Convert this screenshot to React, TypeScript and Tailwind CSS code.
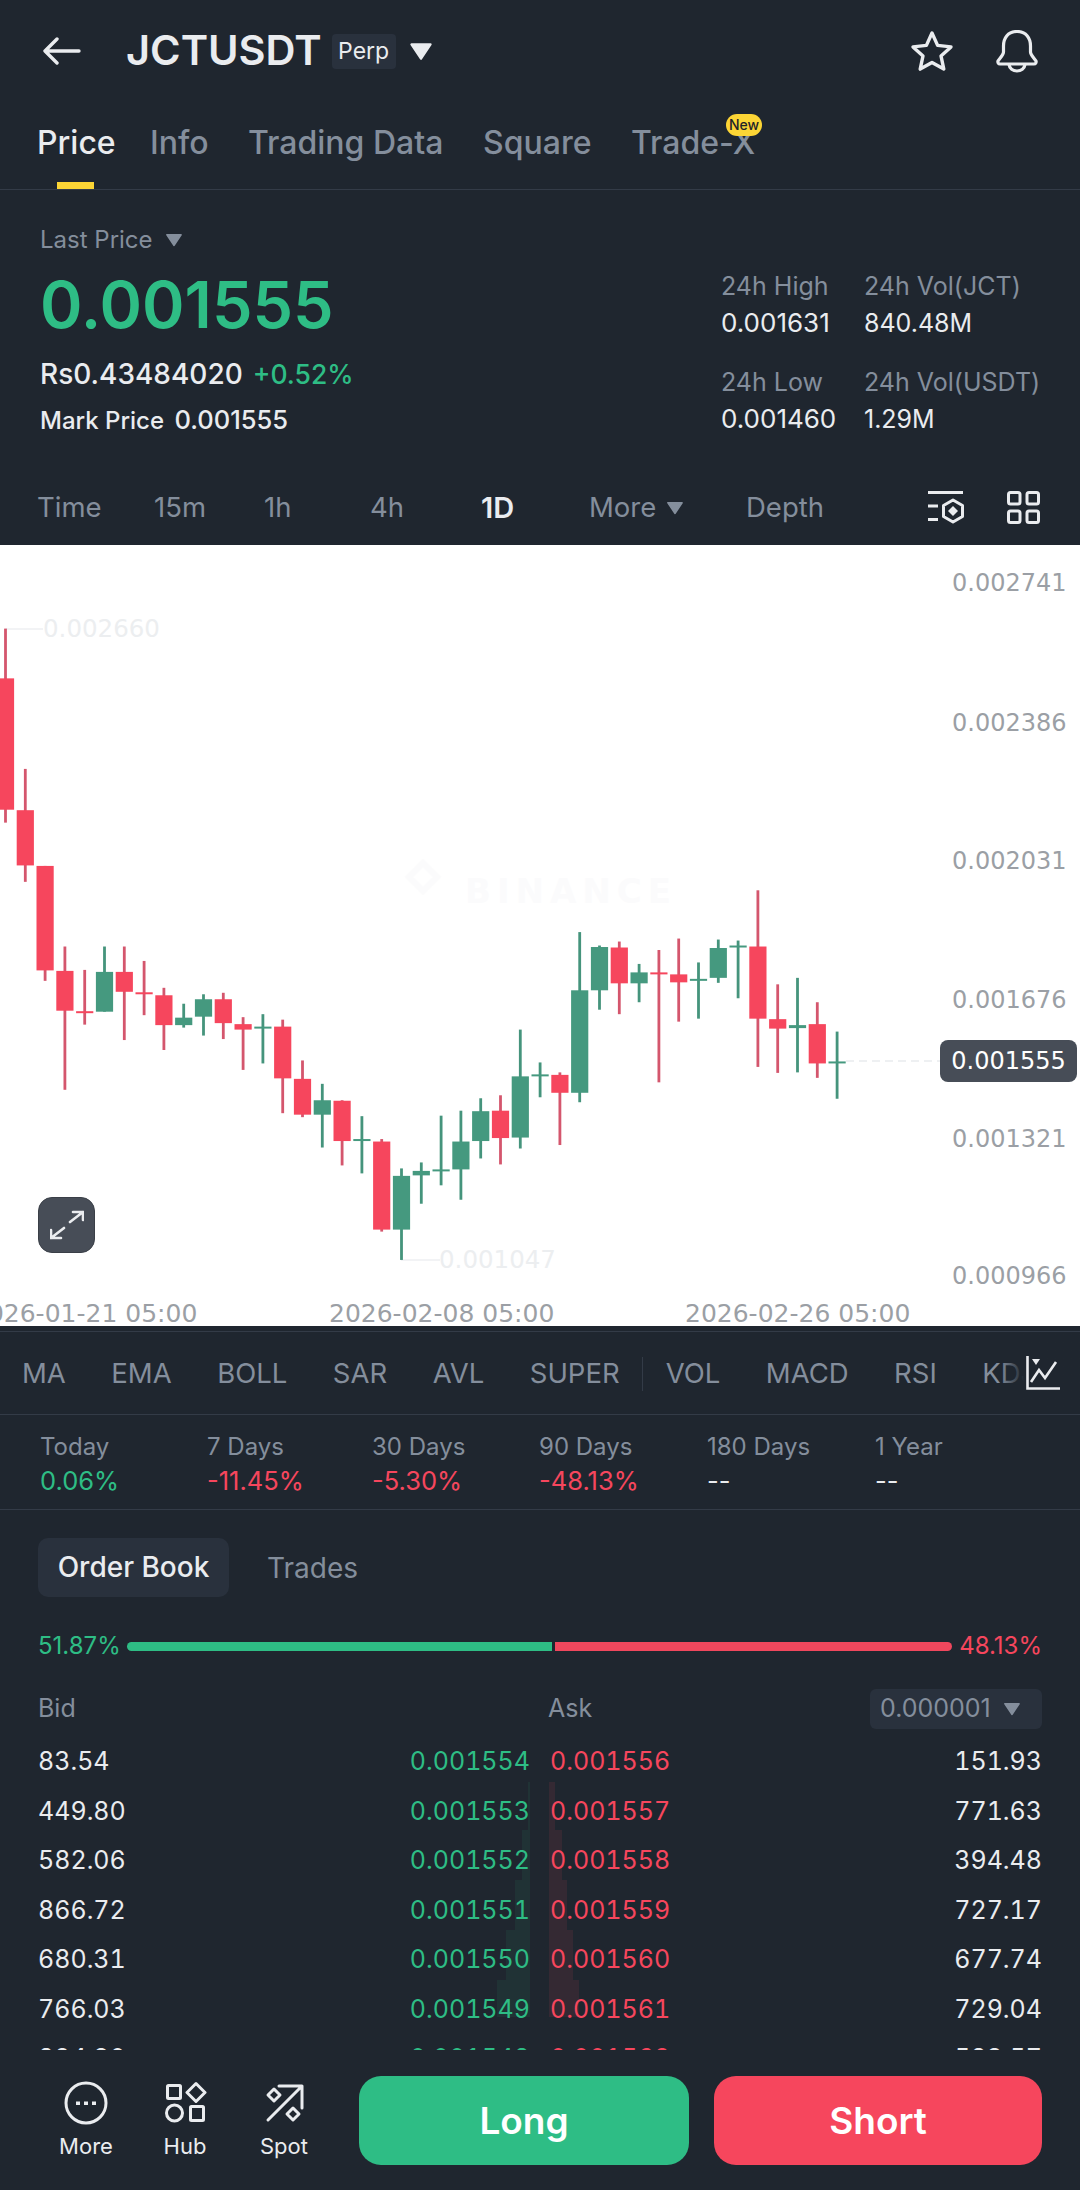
// [wickTop, wickBottom, bodyTop, bodyBottom, up]
const candles: [number, number, number, number, boolean][] = [
  [158, 548, 258, 522, false],
  [440, 667, 523, 634, false],
  [635, 866, 635, 845, false],
  [797, 1085, 846, 926, false],
  [844, 954, 927, 931, false],
  [797, 928, 848, 928, true],
  [797, 985, 848, 888, false],
  [826, 935, 889, 893, false],
  [880, 1005, 895, 955, false],
  [912, 960, 940, 955, true],
  [893, 976, 903, 938, true],
  [890, 983, 903, 951, false],
  [939, 1045, 953, 964, false],
  [933, 1032, 958, 962, true],
  [944, 1132, 958, 1062, false],
  [1026, 1140, 1063, 1135, false],
  [1073, 1201, 1106, 1135, true],
  [1106, 1237, 1107, 1188, false],
  [1138, 1253, 1184, 1188, true],
  [1184, 1370, 1189, 1366, false],
  [1243, 1427, 1258, 1366, true],
  [1231, 1314, 1248, 1257, true],
  [1137, 1277, 1245, 1249, true],
  [1127, 1306, 1189, 1245, true],
  [1102, 1223, 1128, 1188, true],
  [1096, 1235, 1127, 1182, false],
  [964, 1203, 1058, 1181, true],
  [1030, 1100, 1054, 1058, true],
  [1050, 1196, 1055, 1091, false],
  [768, 1110, 885, 1091, true],
  [795, 924, 798, 885, true],
  [787, 933, 799, 871, false],
  [832, 909, 849, 871, true],
  [804, 1070, 849, 853, false],
  [781, 948, 853, 869, false],
  [829, 942, 862, 866, true],
  [783, 870, 800, 860, true],
  [785, 901, 795, 799, true],
  [684, 1039, 797, 942, false],
  [873, 1051, 943, 962, false],
  [860, 1050, 955, 961, true],
  [909, 1061, 953, 1032, false],
  [968, 1103, 1028, 1032, true],
];

const axisLabels: [string, number][] = [
  ["0.002741", 38],
  ["0.002386", 178],
  ["0.002031", 316],
  ["0.001676", 455],
  ["0.001321", 594],
  ["0.000966", 731],
];

const book = [
  ["83.54", "0.001554", "0.001556", "151.93"],
  ["449.80", "0.001553", "0.001557", "771.63"],
  ["582.06", "0.001552", "0.001558", "394.48"],
  ["866.72", "0.001551", "0.001559", "727.17"],
  ["680.31", "0.001550", "0.001560", "677.74"],
  ["766.03", "0.001549", "0.001561", "729.04"],
  ["824.90", "0.001548", "0.001562", "583.57"],
];

function Caret({ className }: { className: string }) {
  return (
    <svg viewBox="0 0 20 16" className={className} fill="currentColor" stroke="currentColor" strokeWidth="2" strokeLinejoin="round">
      <path d="M2 2h16l-8 12z" />
    </svg>
  );
}

function CandleChart() {
  const y = (v: number) => v / 2.01 + 5;
  return (
    <svg viewBox="0 0 1080 781" className="absolute inset-0 w-[1080px] h-[781px]" fontFamily="'DejaVu Sans', sans-serif">
      <text x="465" y="358" fontSize="34" fontWeight="700" letterSpacing="6" fill="#fbfbfc">BINANCE</text>
      <path d="M423 318l14 14-14 14-14-14z" fill="none" stroke="#fbfbfc" strokeWidth="6" />
      <path d="M5.5 84H43M401 715h39" stroke="#eef0f2" strokeWidth="1.5" />
      <text x="43" y="92" fontSize="24.5" fill="#eceef0">0.002660</text>
      <text x="439" y="723" fontSize="24.5" fill="#eceef0">0.001047</text>
      <path d="M846 516H940" stroke="#e9ebee" strokeWidth="1.5" strokeDasharray="8 5" />
      {candles.map((c, i) => {
        const cx = 5.5 + i * 19.8;
        return (
          <g key={i}>
            <rect x={cx - 1.4} y={y(c[0])} width="2.8" height={y(c[1]) - y(c[0])} fill={c[4] ? "#45947c" : "#d4566d"} />
            <rect x={cx - 8.6} y={y(c[2])} width="17.2" height={y(c[3]) - y(c[2])} fill={c[4] ? "#45997f" : "#f6465d"} />
          </g>
        );
      })}
      {axisLabels.map(([label, ty]) => (
        <text key={label} x="952" y={ty + 8} fontSize="24" fill="#9b9fa5">{label}</text>
      ))}
      <text x="-28" y="777" fontSize="25" fill="#9b9fa5">2026-01-21 05:00</text>
      <text x="329" y="777" fontSize="25" fill="#9b9fa5">2026-02-08 05:00</text>
      <text x="685" y="777" fontSize="25" fill="#9b9fa5">2026-02-26 05:00</text>
    </svg>
  );
}

export default function App() {
  return (
    <div className="w-[1080px] h-[2190px] overflow-hidden flex flex-col bg-[#1f262f] text-[#eaecef] font-['Inter',sans-serif]">
      {/* Header */}
      <header className="h-[102px] shrink-0 flex items-center pl-[43px] pr-[42px]">
        <svg viewBox="0 0 38 28" className="w-[38px] h-[28px] text-[#eaecef]" fill="none" stroke="currentColor" strokeWidth="3.4" strokeLinecap="round" strokeLinejoin="round">
          <path d="M36 14H3M14 2L2 14l12 12" />
        </svg>
        <h1 className="ml-[45px] text-[41.5px] leading-none font-semibold text-[#eaecef]">JCTUSDT</h1>
        <span className="ml-[10px] w-[64px] h-[35px] rounded-[4px] bg-[#29313d] text-[23px] leading-[35px] text-center">Perp</span>
        <Caret className="ml-[13px] w-[24px] h-[19px] text-[#eaecef]" />
        <svg viewBox="0 0 44 42" className="ml-auto w-[44px] h-[42px]" fill="none" stroke="currentColor" strokeWidth="3.4" strokeLinejoin="round">
          <path d="M22 3l5.6 12.4 13.4 1.5-10 9 2.8 13.2L22 32.4l-11.8 6.7L13 25.9l-10-9 13.4-1.5z" />
        </svg>
        <svg viewBox="0 0 42 43" className="ml-[42px] w-[42px] h-[43px]" fill="none" stroke="currentColor" strokeWidth="3.2" strokeLinecap="round" strokeLinejoin="round">
          <path d="M21 1.5C12 1.5 7.5 8 7.5 16v6c0 3-4.5 7-5.5 9-.5 1.5.5 3 2 3h34c1.5 0 2.5-1.5 2-3-1-2-5.5-6-5.5-9v-6c0-8-4.5-14.5-13.5-14.5z" />
          <path d="M13 34.5c.5 4 4 6.5 8 6.5s7.5-2.5 8-6.5" />
        </svg>
      </header>

      {/* Tabs */}
      <nav className="h-[88px] shrink-0 flex pl-[37px] border-b border-[#333b47] text-[32px] leading-[40px] font-medium text-[#848e9c] whitespace-nowrap">
        <div className="relative w-[113px] h-full pt-[21px] text-[#eaecef]">
          Price
          <span className="absolute bottom-0 left-[20px] w-[37px] h-[7px] bg-[#fcd535]" />
        </div>
        <div className="w-[98px] pt-[21px]">Info</div>
        <div className="w-[235px] pt-[21px]">Trading Data</div>
        <div className="w-[148px] pt-[21px]">Square</div>
        <div className="relative pt-[21px]">
          Trade-X
          <span className="absolute top-[12px] left-[95px] w-[36px] h-[22px] rounded-full bg-[#fcd535] text-[#1e2329] text-[14px] leading-[22px] text-center">New</span>
        </div>
      </nav>

      {/* Price summary */}
      <section className="h-[280px] shrink-0 flex pl-[40px]">
        <div className="flex-1 pt-[35px]">
          <div className="flex items-center h-[30px] text-[24px] text-[#848e9c]">
            Last Price
            <Caret className="ml-[12px] w-[18px] h-[14px]" />
          </div>
          <div className="mt-[15px] h-[70px] text-[64.5px] leading-[70px] font-semibold text-[#2ebd85]">0.001555</div>
          <div className="mt-[16px] h-[36px] text-[28px] leading-[36px] font-medium">
            Rs0.43484020
            <span className="ml-[10px] text-[26.5px] text-[#2ebd85]">+0.52%</span>
          </div>
          <div className="mt-[13px] h-[30px] text-[24px] leading-[30px] font-medium">
            Mark Price <span className="ml-[4px] text-[25.5px]">0.001555</span>
          </div>
        </div>
        <div className="w-[359px] pt-[81px] grid grid-cols-[143px_1fr] content-start text-[25px] leading-[30px]">
          <div className="text-[#848e9c]">24h High</div>
          <div className="text-[#848e9c]">24h Vol(JCT)</div>
          <div className="mt-[7px] text-[26px]">0.001631</div>
          <div className="mt-[7px]">840.48M</div>
          <div className="mt-[29px] text-[#848e9c]">24h Low</div>
          <div className="mt-[29px] text-[#848e9c]">24h Vol(USDT)</div>
          <div className="mt-[7px] text-[26px]">0.001460</div>
          <div className="mt-[7px]">1.29M</div>
        </div>
      </section>

      {/* Intervals */}
      <div className="h-[75px] shrink-0 flex items-center pl-[37px] text-[27.5px] text-[#848e9c]">
        <div className="w-[117px]">Time</div>
        <div className="w-[110px]">15m</div>
        <div className="w-[106px]">1h</div>
        <div className="w-[111px]">4h</div>
        <div className="w-[108px] text-[29px] font-semibold text-[#eaecef]">1D</div>
        <div className="w-[157px] flex items-center">
          More
          <Caret className="ml-[10px] w-[18px] h-[14px]" />
        </div>
        <div className="w-[182px]">Depth</div>
        <svg viewBox="0 0 36 34" className="w-[36px] h-[34px] text-[#eaecef]" fill="none" stroke="currentColor" strokeWidth="3" strokeLinejoin="round">
          <path d="M0 1.5h35M0 15h10M0 28.5h10" />
          <path d="M25 9l9.5 5.5v11L25 31l-9.5-5.5v-11z" />
          <path d="M25 15l5 5-5 5-5-5z" fill="currentColor" stroke="none" />
        </svg>
        <svg viewBox="0 0 33 33" className="ml-[43px] w-[33px] h-[33px] text-[#eaecef]" fill="none" stroke="currentColor" strokeWidth="3">
          <rect x="1.5" y="1.5" width="11.5" height="11.5" rx="2" />
          <rect x="20" y="1.5" width="11.5" height="11.5" rx="2" />
          <rect x="1.5" y="20" width="11.5" height="11.5" rx="2" />
          <rect x="20" y="20" width="11.5" height="11.5" rx="2" />
        </svg>
      </div>

      {/* Chart */}
      <div className="relative h-[781px] shrink-0 bg-white overflow-hidden">
        <CandleChart />
        <div className="absolute left-[940px] top-[495px] w-[137px] h-[42px] rounded-[8px] bg-[#474d57] text-white text-[24px] leading-[42px] text-center font-['DejaVu_Sans',sans-serif]">
          0.001555
        </div>
        <div className="absolute left-[38px] top-[652px] w-[57px] h-[56px] rounded-[14px] bg-[#474d57] border border-[#3a3f47] flex items-center justify-center">
          <svg viewBox="0 0 34 30" className="w-[34px] h-[30px] text-[#eaecef]" fill="none" stroke="currentColor" strokeWidth="2.6" strokeLinecap="round" strokeLinejoin="round">
            <path d="M20 12L33 2M23 2h10v8M14 18L1 28M11 28H1v-8" />
          </svg>
        </div>
      </div>

      {/* Indicators */}
      <div className="relative h-[84px] shrink-0 flex items-center gap-[45.5px] pl-[22px] pt-[2px] mt-[5px] border-t border-b border-[#333b47] text-[27.5px] text-[#848e9c] overflow-hidden whitespace-nowrap">
        <span>MA</span>
        <span>EMA</span>
        <span>BOLL</span>
        <span>SAR</span>
        <span>AVL</span>
        <span>SUPER</span>
        <span className="-mx-[23px] w-px h-[34px] bg-[#333b47]" />
        <span>VOL</span>
        <span>MACD</span>
        <span>RSI</span>
        <span>KDJ</span>
        <div className="absolute right-0 top-0 bottom-0 w-[80px] flex items-center justify-end pr-[20px] bg-gradient-to-r from-transparent via-[#1f262f] via-30% to-[#1f262f]">
          <svg viewBox="0 0 34 34" className="w-[34px] h-[34px] text-[#eaecef]" fill="none" stroke="currentColor" strokeWidth="2.6">
            <path d="M1.5 0v32.5H34" />
            <path d="M5 26l8-12 6 8 11-16" />
            <path d="M6 3h8l-4 6z" fill="currentColor" stroke="none" />
          </svg>
        </div>
      </div>

      {/* Period change */}
      <div className="h-[95px] shrink-0 grid grid-cols-[167px_165px_167px_168px_168px_1fr] pl-[40px] pt-[16px] border-b border-[#333b47] text-[24px] leading-[32px] text-[#848e9c]">
        {[
          ["Today", "0.06%", "text-[#2ebd85]"],
          ["7 Days", "-11.45%", "text-[#f6465d]"],
          ["30 Days", "-5.30%", "text-[#f6465d]"],
          ["90 Days", "-48.13%", "text-[#f6465d]"],
          ["180 Days", "--", "text-[#eaecef]"],
          ["1 Year", "--", "text-[#eaecef]"],
        ].map(([label, value, color]) => (
          <div key={label}>
            <div>{label}</div>
            <div className={`mt-[2px] text-[25.5px] ${color}`}>{value}</div>
          </div>
        ))}
      </div>

      {/* Order book */}
      <section className="flex-1 min-h-0 overflow-hidden px-[38px] pt-[28px]">
        <div className="flex items-center h-[59px] text-[28px]">
          <div className="w-[191px] h-full rounded-[10px] bg-[#29313d] text-center leading-[59px] font-medium">Order Book</div>
          <div className="ml-[38px] text-[#848e9c]">Trades</div>
        </div>
        <div className="mt-[34px] h-[30px] flex items-center text-[24px]">
          <span className="w-[89px] text-[#2ebd85]">51.87%</span>
          <span className="w-[425px] h-[9px] rounded-l-full bg-[#2ebd85]" />
          <span className="ml-[3px] w-[397px] h-[9px] rounded-r-full bg-[#f0475d]" />
          <span className="ml-auto text-[#f6465d]">48.13%</span>
        </div>
        <div className="mt-[28px] h-[40px] flex items-center text-[25px] text-[#848e9c]">
          <span className="w-[510px]">Bid</span>
          <span>Ask</span>
          <div className="ml-auto w-[172px] h-full rounded-[6px] bg-[#29313d] flex items-center pl-[10px]">
            0.000001
            <Caret className="ml-[12px] w-[18px] h-[14px]" />
          </div>
        </div>
        <div className="relative mt-[8px] text-[25px] leading-[49.5px] tabular-nums">
          <svg viewBox="0 0 1080 280" className="absolute left-[-38px] top-0 w-[1080px] h-[280px]">
            <path d="M530 45h-2v48h-6v50h-7v50h-9v50h-9v47h-8v30h41z" fill="#2ebd85" fillOpacity="0.08" />
            <path d="M549 45h6v48h7v50h5v50h6v50h6v47h8v30h-38z" fill="#f6465d" fillOpacity="0.1" />
          </svg>
          {book.map(([bid, bidPrice, askPrice, ask]) => (
            <div key={bidPrice} className="relative grid grid-cols-2 gap-[20px] h-[49.5px]">
              <div className="flex justify-between">
                <span>{bid}</span>
                <span className="text-[#2ebd85]">{bidPrice}</span>
              </div>
              <div className="flex justify-between">
                <span className="text-[#f6465d]">{askPrice}</span>
                <span>{ask}</span>
              </div>
            </div>
          ))}
        </div>
      </section>

      {/* Bottom bar */}
      <footer className="h-[140px] shrink-0 flex items-start pt-[26px] pr-[38px] bg-[#1f262f] text-[22px]">
        <div className="w-[359px] flex pl-[36px]">
          <div className="w-[100px] flex flex-col items-center">
            <svg viewBox="0 0 44 44" className="mt-[5px] w-[44px] h-[44px]" fill="none" stroke="currentColor" strokeWidth="3">
              <circle cx="22" cy="22" r="20" />
              <path d="M12 20.5h4V24h-4zM20 20.5h4V24h-4zM28 20.5h4V24h-4z" fill="currentColor" stroke="none" />
            </svg>
            <span className="mt-[7px] leading-[28px]">More</span>
          </div>
          <div className="w-[98px] flex flex-col items-center">
            <svg viewBox="0 0 44 44" className="mt-[5px] w-[44px] h-[44px]" fill="none" stroke="currentColor" strokeWidth="3">
              <rect x="4.5" y="4.5" width="13" height="13" rx="1" />
              <path d="M33 2.5l9 9-9 9-9-9z" strokeLinejoin="round" />
              <circle cx="11.5" cy="32" r="8" />
              <rect x="27.5" y="25.5" width="13" height="14" rx="1" />
            </svg>
            <span className="mt-[7px] leading-[28px]">Hub</span>
          </div>
          <div className="w-[100px] flex flex-col items-center">
            <svg viewBox="0 0 44 44" className="mt-[5px] w-[44px] h-[44px]" fill="none" stroke="currentColor" strokeWidth="3" strokeLinecap="round" strokeLinejoin="round">
              <path d="M6 39L40 5M17 5h23v22" />
              <path d="M12 8l6 6-6 6-6-6zM31 27l6 6-6 6-6-6z" />
            </svg>
            <span className="mt-[7px] leading-[28px]">Spot</span>
          </div>
        </div>
        <button className="w-[330px] h-[89px] rounded-[22px] bg-[#2ebd85] text-white text-[37px] font-semibold">Long</button>
        <button className="ml-[25px] w-[328px] h-[89px] rounded-[22px] bg-[#f6465d] text-white text-[37px] font-semibold">Short</button>
      </footer>
    </div>
  );
}
